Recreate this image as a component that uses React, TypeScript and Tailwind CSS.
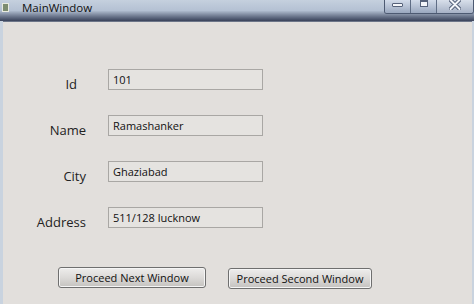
const fields = [
  { label: "Id", value: "101", pad: "pr-[9px]" },
  { label: "Name", value: "Ramashanker", pad: "pr-0" },
  { label: "City", value: "Ghaziabad", pad: "pr-0" },
  { label: "Address", value: "511/128 lucknow", pad: "pr-0" },
];

const App = () => {
  return (
    <div
      className="w-[474px] h-[304px] overflow-hidden flex flex-col bg-[#c9d3df]"
      style={{ fontFamily: '"Open Sans", "Noto Sans", sans-serif' }}
    >
      {/* title bar */}
      <div className="h-[21px] flex items-start bg-gradient-to-b from-[#c5d0de] via-[#b4c1d3] to-[#39425a]">
        <div className="mt-[3px] ml-[2px] w-[7px] h-[9px] bg-[#7c8c70] border border-[#e8eadf]" />
        <span className="ml-[13px] mt-[1px] text-[11.5px] leading-[14px] text-[#111]">
          MainWindow
        </span>
        <div className="ml-auto flex h-[14px] border border-t-0 border-[#4d5a72] rounded-b-[3px] overflow-hidden">
          <div className="w-[26px] flex justify-center bg-gradient-to-b from-[#d3dcea] to-[#9aa8bf] border-r border-[#5f6d85]">
            <div className="mt-[3px] w-[11px] h-[4px] bg-[#f4f6fa] border border-[#56627a] rounded-[1px]" />
          </div>
          <div className="w-[26px] flex justify-center bg-gradient-to-b from-[#d3dcea] to-[#9aa8bf] border-r border-[#5f6d85]">
            <div className="w-[8px] h-[7px] bg-[#f4f6fa] border border-[#56627a] border-t-[2px]" />
          </div>
          <div className="w-[36px] flex justify-center bg-gradient-to-b from-[#d8dfea] to-[#a7b2c6]">
            <svg width="12" height="10" viewBox="0 0 12 10">
              <path d="M1.5 0 L10.5 9 M10.5 0 L1.5 9" stroke="#56627a" strokeWidth="4" strokeLinecap="round" />
              <path d="M1.5 0 L10.5 9 M10.5 0 L1.5 9" stroke="#f4f6fa" strokeWidth="2" strokeLinecap="round" />
            </svg>
          </div>
        </div>
      </div>

      {/* window body */}
      <div className="flex-1 ml-[3px] mr-[2px] border-t border-[#6c7588] bg-[#e2dfdc] flex flex-col text-[#222]">
        <div className="mt-[47px] flex flex-col gap-[26px]">
          {fields.map((f) => (
            <div key={f.label} className="flex items-start h-[20px]">
              <div className={`w-[83px] text-right text-[13px] leading-[20px] mt-[5px] ${f.pad}`}>
                {f.label}
              </div>
              <div className="ml-[22px] w-[155px] h-[21px] border border-[#a9a7a4] bg-[#e5e3e0] px-[4px] text-[11px] leading-[19px] text-[#111]">
                {f.value}
              </div>
            </div>
          ))}
        </div>
        <div className="mt-[40px] flex items-start text-[11px] text-[#111]">
          <button className="ml-[55px] w-[148px] h-[21px] rounded-[3px] border border-[#6f6f6f] bg-gradient-to-b from-[#eeedec] via-[#dcdad8] to-[#c4c2bf] leading-[18px] shadow-[inset_0_0_0_1px_#f5f5f5]">
            Proceed Next Window
          </button>
          <button className="ml-[22px] mt-[1px] w-[144px] h-[21px] rounded-[3px] border border-[#6f6f6f] bg-gradient-to-b from-[#eeedec] via-[#dcdad8] to-[#c4c2bf] leading-[18px] shadow-[inset_0_0_0_1px_#f5f5f5]">
            Proceed Second Window
          </button>
        </div>
      </div>
    </div>
  );
};

export default App;
